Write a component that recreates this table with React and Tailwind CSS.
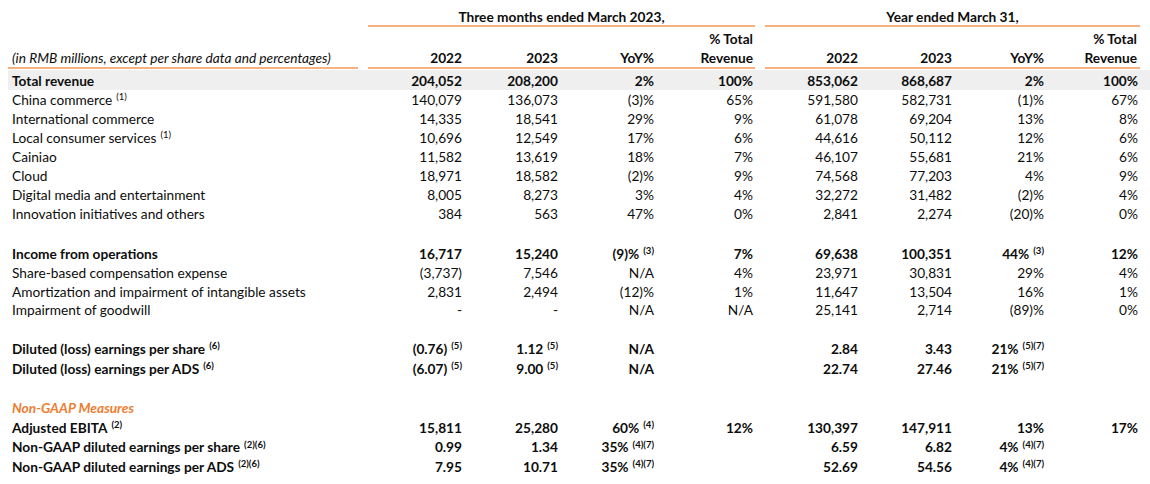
const rows = [
  { label: "Total revenue", bold: true, gray: true, h: "h-[20px]", q: ["204,052", "208,200", "2%", "100%"], y: ["853,062", "868,687", "2%", "100%"] },
  { label: "China commerce^(1)", q: ["140,079", "136,073", "(3)%", "65%"], y: ["591,580", "582,731", "(1)%", "67%"] },
  { label: "International commerce", q: ["14,335", "18,541", "29%", "9%"], y: ["61,078", "69,204", "13%", "8%"] },
  { label: "Local consumer services^(1)", q: ["10,696", "12,549", "17%", "6%"], y: ["44,616", "50,112", "12%", "6%"] },
  { label: "Cainiao", q: ["11,582", "13,619", "18%", "7%"], y: ["46,107", "55,681", "21%", "6%"] },
  { label: "Cloud", q: ["18,971", "18,582", "(2)%", "9%"], y: ["74,568", "77,203", "4%", "9%"] },
  { label: "Digital media and entertainment", q: ["8,005", "8,273", "3%", "4%"], y: ["32,272", "31,482", "(2)%", "4%"] },
  { label: "Innovation initiatives and others", q: ["384", "563", "47%", "0%"], y: ["2,841", "2,274", "(20)%", "0%"] },
  { blank: true, h: "h-[21px]" },
  { label: "Income from operations", bold: true, q: ["16,717", "15,240", "(9)%^(3)", "7%"], y: ["69,638", "100,351", "44%^(3)", "12%"] },
  { label: "Share-based compensation expense", q: ["(3,737)", "7,546", "N/A", "4%"], y: ["23,971", "30,831", "29%", "4%"] },
  { label: "Amortization and impairment of intangible assets", h: "h-[18px]", q: ["2,831", "2,494", "(12)%", "1%"], y: ["11,647", "13,504", "16%", "1%"] },
  { label: "Impairment of goodwill", q: ["-", "-", "N/A", "N/A"], y: ["25,141", "2,714", "(89)%", "0%"] },
  { blank: true, h: "h-[19px]" },
  { label: "Diluted (loss) earnings per share^(6)", bold: true, h: "h-[20px]", q: ["(0.76)^(5)", "1.12^(5)", "N/A", ""], y: ["2.84", "3.43", "21%^(5)(7)", ""] },
  { label: "Diluted (loss) earnings per ADS^(6)", bold: true, h: "h-[20px]", q: ["(6.07)^(5)", "9.00^(5)", "N/A", ""], y: ["22.74", "27.46", "21%^(5)(7)", ""] },
  { blank: true, h: "h-[19px]" },
  { section: "Non-GAAP Measures", h: "h-[20px]" },
  { label: "Adjusted EBITA^(2)", bold: true, h: "h-[20px]", q: ["15,811", "25,280", "60%^(4)", "12%"], y: ["130,397", "147,911", "13%", "17%"] },
  { label: "Non-GAAP diluted earnings per share^(2)(6)", bold: true, h: "h-[19.5px]", q: ["0.99", "1.34", "35%^(4)(7)", ""], y: ["6.59", "6.82", "4%^(4)(7)", ""] },
  { label: "Non-GAAP diluted earnings per ADS^(2)(6)", bold: true, h: "h-[19.5px]", q: ["7.95", "10.71", "35%^(4)(7)", ""], y: ["52.69", "54.56", "4%^(4)(7)", ""] },
]

const qWidths = ["w-[97px]", "w-[96px]", "w-[96px]", "w-[98px]"]
const yWidths = ["w-[96px]", "w-[94px]", "w-[92px]", "w-[93px]"]

function Txt({ value }) {
  if (!value) return null
  const [main, sup] = value.split("^")
  return (
    <>
      {main}
      {sup && <sup className="text-[9.5px] ml-[4px]">{sup}</sup>}
    </>
  )
}

function Group({ values, widths, gray }) {
  return (
    <div className={`flex ${gray ? "bg-[#efefef]" : ""}`}>
      {values.map((v, i) => (
        <div key={i} className={`${widths[i]} text-right ${i === 3 ? "pr-[2px]" : "pr-[3px]"}`}>
          <Txt value={v} />
        </div>
      ))}
    </div>
  )
}

function Row({ row }) {
  const h = row.h || "h-[19px]"
  if (row.blank) return <div className={h} />
  if (row.section) {
    return (
      <div className={`${h} flex items-center pl-[4px] font-bold italic text-[#ed7d31]`}>
        {row.section}
      </div>
    )
  }
  return (
    <div className={`${h} flex items-center ${row.bold ? "font-bold" : ""} ${row.gray ? "bg-[#efefef]" : ""}`}>
      <div className="w-[350px] pl-[4px] whitespace-nowrap">
        <Txt value={row.label} />
      </div>
      <div className="w-[10px]" />
      <Group values={row.q} widths={qWidths} />
      <div className="w-[10px]" />
      <Group values={row.y} widths={yWidths} />
    </div>
  )
}

export default function App() {
  return (
    <div className="w-[1150px] h-[484px] bg-white text-[#0d0d0d] text-[13.7px] leading-[19px] overflow-hidden" style={{ fontFamily: "Lato, 'Open Sans', sans-serif" }}>
      <div className="pl-[8px] pt-[7px]">
        {/* group titles */}
        <div className="flex font-bold">
          <div className="w-[360px]" />
          <div className="w-[387px] text-center border-b-2 border-[#f4b183] h-[20px]">Three months ended March 2023,</div>
          <div className="w-[10px]" />
          <div className="w-[375px] text-center border-b-2 border-[#f4b183] h-[20px]">Year ended March 31,</div>
        </div>

        {/* column headings */}
        <div className="flex font-bold items-end pt-[2px]">
          <div className="w-[350px] pl-[4px] font-normal italic border-b-2 border-[#f4b183] whitespace-nowrap">
            (in RMB millions, except per share data and percentages)
          </div>
          <div className="w-[10px]" />
          <div className="flex items-end border-b-2 border-[#f4b183]">
            {["2022", "2023", "YoY%"].map((t, i) => (
              <div key={t} className={`${qWidths[i]} text-right pr-[3px]`}>{t}</div>
            ))}
            <div className={`${qWidths[3]} text-right pr-[2px]`}>% Total<br />Revenue</div>
          </div>
          <div className="w-[10px]" />
          <div className="flex items-end border-b-2 border-[#f4b183]">
            {["2022", "2023", "YoY%"].map((t, i) => (
              <div key={t} className={`${yWidths[i]} text-right pr-[3px]`}>{t}</div>
            ))}
            <div className={`${yWidths[3]} text-right pr-[3px]`}>% Total<br />Revenue</div>
          </div>
        </div>

        <div className="h-[1px]" />

        {rows.map((r, i) => (
          <Row key={i} row={r} />
        ))}
      </div>
    </div>
  )
}
